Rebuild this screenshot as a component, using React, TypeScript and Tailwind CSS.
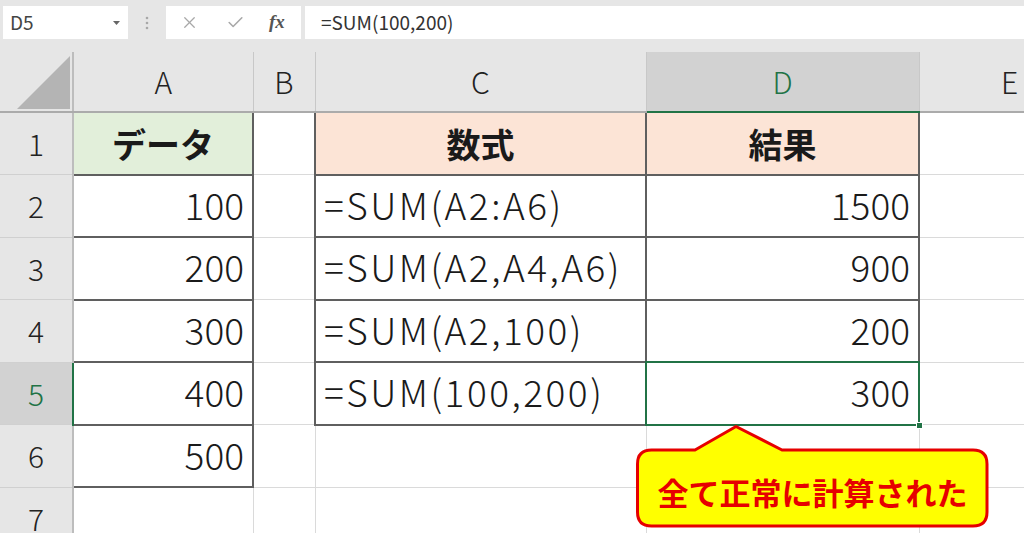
import React from 'react';
import { X, Check } from 'lucide-react';

interface RowData {
  n: number;
  a?: string;
  c?: string;
  d?: string;
}

const rows: RowData[] = [
  { n: 1, a: 'データ', c: '数式', d: '結果' },
  { n: 2, a: '100', c: '=SUM(A2:A6)', d: '1500' },
  { n: 3, a: '200', c: '=SUM(A2,A4,A6)', d: '900' },
  { n: 4, a: '300', c: '=SUM(A2,100)', d: '200' },
  { n: 5, a: '400', c: '=SUM(100,200)', d: '300' },
  { n: 6, a: '500' },
  { n: 7 },
];

// Spreadsheet grid: the header row, row numbers and the bordered data blocks
const Sheet: React.FC = () => {
  const rowHead = (n: number) =>
    n === 5
      ? 'h-[62.5px] border-b border-r-2 border-b-[#d0d0d0] border-r-[#217346] bg-[#d2d2d2] text-center text-[30px] font-light text-[#217346]'
      : 'h-[62.5px] border-b border-r-2 border-b-[#d0d0d0] border-r-[#bdbdbd] bg-[#e6e6e6] text-center text-[30px] font-light text-[#222]';

  const aCell = (n: number) => {
    if (n === 1) return 'border-r-2 border-b-2 border-[#5f5f5f] bg-[#e2efda] text-center text-[34px] font-bold';
    if (n <= 6) return 'border-t-2 border-r-2 border-b-2 border-[#5f5f5f] pr-[8px] pb-[3px] text-right';
    return 'border-r border-b border-[#dadada]';
  };

  const cCell = (n: number) => {
    if (n === 1) return 'border-l-2 border-r-2 border-b-2 border-[#5f5f5f] bg-[#fce4d6] text-center text-[34px] font-bold';
    if (n <= 5) return 'border-2 border-[#5f5f5f] pl-[8px] pb-[3px] text-left tracking-[2.5px]';
    return 'border-r border-b border-[#dadada]';
  };

  const dCell = (n: number) => {
    if (n === 1) return 'border-r-2 border-b-2 border-[#5f5f5f] bg-[#fce4d6] text-center text-[34px] font-bold';
    if (n === 5) return 'relative border-2 border-[#5f5f5f] pr-[8px] pb-[3px] text-right';
    if (n <= 5) return 'border-2 border-[#5f5f5f] pr-[8px] pb-[3px] text-right';
    return 'border-r border-b border-[#dadada]';
  };

  return (
    <table className="w-[1100px] table-fixed border-collapse text-[37px] font-light text-[#1a1a1a]">
      <colgroup>
        <col className="w-[73px]" />
        <col className="w-[180px]" />
        <col className="w-[62px]" />
        <col className="w-[331px]" />
        <col className="w-[273px]" />
        <col className="w-[181px]" />
      </colgroup>
      <thead>
        <tr>
          <th className="relative h-[60px] border-r-2 border-b-2 border-r-[#bdbdbd] border-b-[#ababab] bg-[#e6e6e6] p-0">
            <svg className="absolute right-[2px] bottom-[2px]" width="53" height="53" viewBox="0 0 53 53">
              <polygon points="53,0 53,53 0,53" fill="#b4b4b4" />
            </svg>
          </th>
          <th className="h-[60px] border-r border-b-2 border-r-[#c8c8c8] border-b-[#ababab] bg-[#e6e6e6] text-[30px] font-light text-[#222]">A</th>
          <th className="h-[60px] border-r border-b-2 border-r-[#c8c8c8] border-b-[#ababab] bg-[#e6e6e6] text-[30px] font-light text-[#222]">B</th>
          <th className="h-[60px] border-r border-b-2 border-r-[#c8c8c8] border-b-[#ababab] bg-[#e6e6e6] text-[30px] font-light text-[#222]">C</th>
          <th className="h-[60px] border-r border-b-2 border-r-[#c8c8c8] border-b-[#217346] bg-[#d2d2d2] text-[30px] font-light text-[#217346]">D</th>
          <th className="h-[60px] border-r border-b-2 border-r-[#c8c8c8] border-b-[#ababab] bg-[#e6e6e6] text-[30px] font-light text-[#222]">E</th>
        </tr>
      </thead>
      <tbody>
        {rows.map((r) => (
          <tr key={r.n}>
            <td className={rowHead(r.n)}>{r.n}</td>
            <td className={aCell(r.n)}>{r.a}</td>
            <td className="border-r border-b border-[#dadada]"></td>
            <td className={cCell(r.n)}>{r.c}</td>
            <td className={dCell(r.n)}>
              {r.d}
              {r.n === 5 && (
                <>
                  <div className="absolute -top-[2px] -left-[2px] -right-[2px] -bottom-[2px] border-2 border-[#217346]" />
                  <div className="absolute -right-[5px] -bottom-[5px] h-[7px] w-[7px] border border-white bg-[#217346]" />
                </>
              )}
            </td>
            <td className="border-r border-b border-[#dadada]"></td>
          </tr>
        ))}
      </tbody>
    </table>
  );
};

const App: React.FC = () => {
  return (
    <div className="relative h-[533px] w-[1024px] overflow-hidden bg-white font-['Noto_Sans_CJK_JP','Noto_Sans',sans-serif]">
      {/* name box + formula bar */}
      <div className="flex h-[52px] items-start bg-[#e6e6e6] pt-[6px]">
        <div className="ml-[3px] flex h-[33px] w-[125px] items-center justify-between bg-white pr-[8px] pl-[7px] text-[19px] text-[#444]">
          <span>D5</span>
          <svg width="7" height="4" viewBox="0 0 7 4">
            <polygon points="0,0 7,0 3.5,4" fill="#666" />
          </svg>
        </div>
        <div className="flex h-[33px] w-[38px] items-center justify-center">
          <svg width="4" height="14" viewBox="0 0 4 14">
            <circle cx="2" cy="2" r="1.3" fill="#a8a8a8" />
            <circle cx="2" cy="7" r="1.3" fill="#a8a8a8" />
            <circle cx="2" cy="12" r="1.3" fill="#a8a8a8" />
          </svg>
        </div>
        <div className="flex h-[33px] w-[135px] items-center bg-white">
          <X className="ml-[14px] text-[#a8a8a8]" size={19} strokeWidth={1.6} />
          <Check className="ml-[27px] text-[#a8a8a8]" size={19} strokeWidth={2} />
          <span className="ml-[24px] font-['Liberation_Serif',serif] text-[19px] font-bold text-[#555] italic">fx</span>
        </div>
        <div className="ml-[4px] flex h-[33px] flex-1 items-center bg-white pl-[16px] text-[19px] text-[#333]">
          =SUM(100,200)
        </div>
      </div>

      <Sheet />

      {/* callout */}
      <div className="absolute top-[424px] left-[636px] h-[104px] w-[353px]">
        <svg className="absolute inset-0" width="353" height="104" viewBox="0 0 353 104">
          <path
            d="M15.5 26 H59 L100 2.5 L146 26 H337 Q351 26 351 40 V88 Q351 102 337 102 H15.5 Q1.5 102 1.5 88 V40 Q1.5 26 15.5 26 Z"
            fill="#ffff00"
            stroke="#e60000"
            strokeWidth="3"
            strokeLinejoin="round"
          />
        </svg>
        <div className="absolute top-[28px] right-0 bottom-0 left-0 flex items-center justify-center pt-[4px] text-[31px] font-bold text-[#e60000]">
          全て正常に計算された
        </div>
      </div>
    </div>
  );
};

export default App;
